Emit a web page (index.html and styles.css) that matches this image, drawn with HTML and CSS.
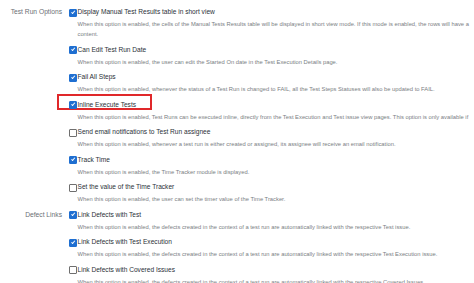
FILE: index.html
```html
<!DOCTYPE html>
<html lang="en">
<head>
  <meta charset="UTF-8" />
  <title>Test Run Options</title>
  <link rel="stylesheet" href="styles.css">
</head>
<body>
  <div class="settings">
    <div class="group">
      <div class="group-label">Test Run Options</div>
      <div class="options">
        <div class="option">
          <span class="cb checked"></span>
          <span class="opt-title">Display Manual Test Results table in short view</span>
          <p class="opt-desc">When this option is enabled, the cells of the Manual Tests Results table will be displayed in short view mode. If this mode is enabled, the rows will have a<br>content.</p>
        </div>
        <div class="option">
          <span class="cb checked"></span>
          <span class="opt-title">Can Edit Test Run Date</span>
          <p class="opt-desc">When this option is enabled, the user can edit the Started On date in the Test Execution Details page.</p>
        </div>
        <div class="option">
          <span class="cb checked"></span>
          <span class="opt-title">Fail All Steps</span>
          <p class="opt-desc">When this option is enabled, whenever the status of a Test Run is changed to FAIL, all the Test Steps Statuses will also be updated to FAIL.</p>
        </div>
        <div class="option highlighted">
          <span class="cb checked"></span>
          <span class="opt-title">Inline Execute Tests</span>
          <p class="opt-desc">When this option is enabled, Test Runs can be executed inline, directly from the Test Execution and Test issue view pages. This option is only available if</p>
        </div>
        <div class="option">
          <span class="cb"></span>
          <span class="opt-title">Send email notifications to Test Run assignee</span>
          <p class="opt-desc">When this option is enabled, whenever a test run is either created or assigned, its assignee will receive an email notification.</p>
        </div>
        <div class="option">
          <span class="cb checked"></span>
          <span class="opt-title">Track Time</span>
          <p class="opt-desc">When this option is enabled, the Time Tracker module is displayed.</p>
        </div>
        <div class="option">
          <span class="cb"></span>
          <span class="opt-title">Set the value of the Time Tracker</span>
          <p class="opt-desc">When this option is enabled, the user can set the timer value of the Time Tracker.</p>
        </div>
      </div>
    </div>

    <div class="group">
      <div class="group-label">Defect Links</div>
      <div class="options">
        <div class="option">
          <span class="cb checked"></span>
          <span class="opt-title">Link Defects with Test</span>
          <p class="opt-desc">When this option is enabled, the defects created in the context of a test run are automatically linked with the respective Test issue.</p>
        </div>
        <div class="option">
          <span class="cb checked"></span>
          <span class="opt-title">Link Defects with Test Execution</span>
          <p class="opt-desc">When this option is enabled, the defects created in the context of a test run are automatically linked with the respective Test Execution issue.</p>
        </div>
        <div class="option">
          <span class="cb"></span>
          <span class="opt-title">Link Defects with Covered Issues</span>
          <p class="opt-desc">When this option is enabled, the defects created in the context of a test run are automatically linked with the respective Covered Issues.</p>
        </div>
      </div>
    </div>
  </div>
</body>
</html>
```

FILE: styles.css
```css
html, body {
  margin: 0;
  padding: 0;
  overflow: hidden;
  background-color: #fff;
}

body {
  font-family: 'Liberation Sans', Arial, sans-serif;
  color: #2b3138;
}

.settings {
  padding: 6px 0 0 0;
}

.group {
  display: grid;
  grid-template-columns: 62px 1fr;
  column-gap: 7px;
}

.group-label {
  font-size: 6.7px;
  line-height: 11px;
  color: #6b6f75;
  text-align: right;
  white-space: nowrap;
}

.option {
  position: relative;
  display: grid;
  grid-template-columns: 8.5px 1fr;
  margin-bottom: 4.5px;
}

.cb {
  width: 6px;
  height: 6px;
  margin-top: 2.5px;
  border: 0.5px solid #6f6f6f;
  border-radius: 1px;
  background-color: #fff;
  position: relative;
}

.cb.checked {
  background-color: #1f6fd1;
  border-color: #1f6fd1;
}

.cb.checked::after {
  content: '';
  position: absolute;
  left: 2px;
  top: 0.4px;
  width: 1.4px;
  height: 3.4px;
  border: solid #fff;
  border-width: 0 1px 1px 0;
  transform: rotate(40deg);
}

.opt-title {
  font-size: 6.6px;
  line-height: 11px;
  white-space: nowrap;
}

.opt-desc {
  grid-column: 2;
  margin: 2px 0 0 0;
  font-size: 5.8px;
  line-height: 10px;
  color: #7a7e83;
  white-space: nowrap;
}

.highlighted::before {
  content: '';
  position: absolute;
  left: -12px;
  top: -4.5px;
  width: 91px;
  height: 12px;
  border: 2px solid #e0282a;
}
```
